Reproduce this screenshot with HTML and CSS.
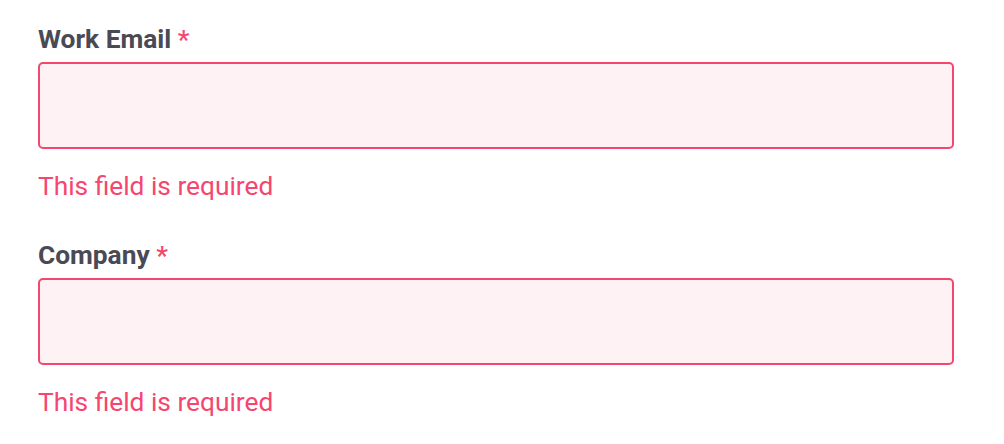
FILE: index.html
```html
<!DOCTYPE html>
<html>
<head>
<meta charset="utf-8">
<link rel="stylesheet" href="styles.css">
</head>
<body>
<form class="form">
  <div class="field">
    <label class="label">Work Email <span class="req">*</span></label>
    <input class="input" type="email">
    <div class="error">This field is required</div>
  </div>
  <div class="field">
    <label class="label">Company <span class="req">*</span></label>
    <input class="input" type="text">
    <div class="error">This field is required</div>
  </div>
</form>
</body>
</html>
```
FILE: styles.css
```css
html, body {
  margin: 0;
  padding: 0;
  background: #ffffff;
}
body {
  font-family: Roboto, "Liberation Sans", sans-serif;
}
.form {
  padding: 20px 50px 0 38px;
  display: flex;
  flex-direction: column;
  gap: 30px;
}
.field {
  display: flex;
  flex-direction: column;
}
.label {
  font-size: 26.3px;
  line-height: 39px;
  font-weight: 700;
  color: #4a4a55;
  margin-bottom: 3px;
}
.req {
  color: #f5466f;
  font-weight: 500;
}
.input {
  box-sizing: border-box;
  width: 100%;
  height: 87px;
  margin: 0;
  border: 2px solid #f5466f;
  border-radius: 5px;
  background: #fff2f4;
  outline: none;
}
.error {
  margin-top: 18px;
  font-size: 26.3px;
  line-height: 39px;
  color: #f5466f;
}
```
